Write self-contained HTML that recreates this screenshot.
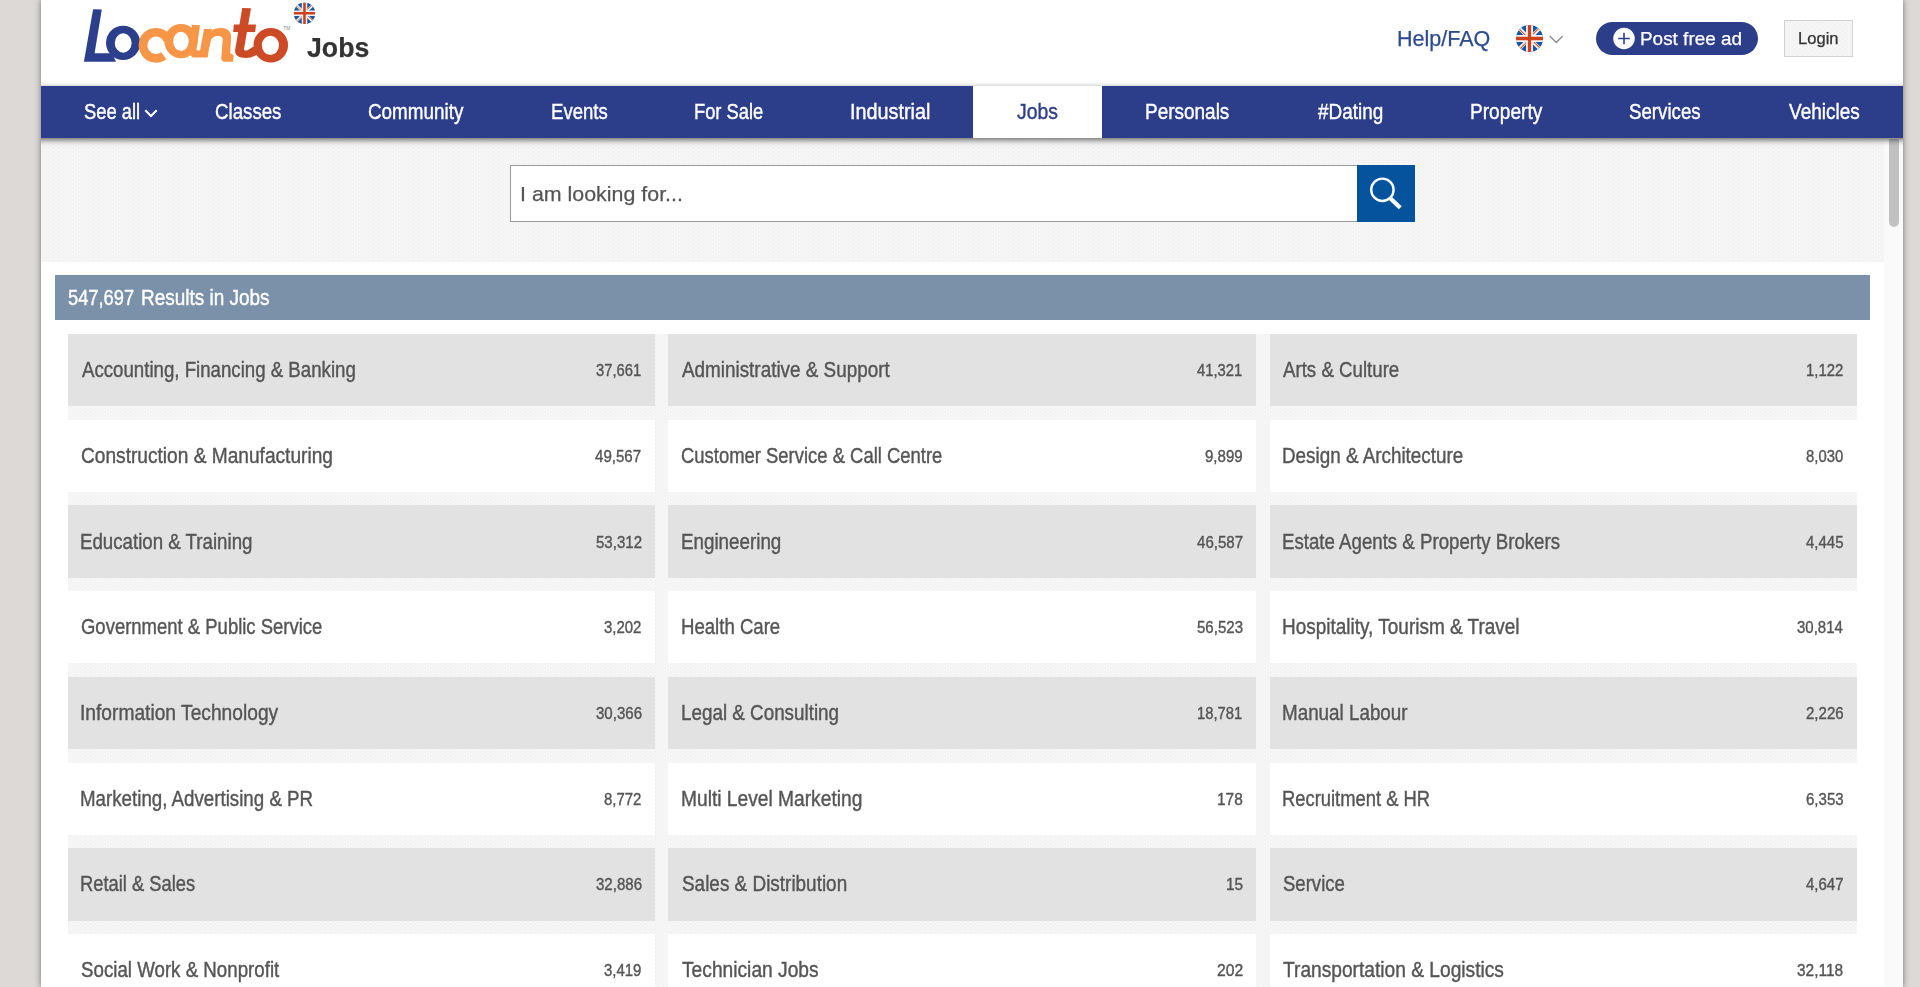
<!DOCTYPE html>
<html><head><meta charset="utf-8"><title>Locanto Jobs</title>
<style>
html,body{margin:0;padding:0}
body{width:1920px;height:987px;overflow:hidden;background:#ddd9d6;font-family:"Liberation Sans",sans-serif;position:relative}
div,span,svg{position:absolute}
#wrap{left:41px;top:0;width:1862px;height:987px;background:#fff;box-shadow:0 0 6px rgba(0,0,0,.5)}
#navclip{left:41px;top:0;width:1862px;height:987px;overflow:hidden}
#nav{left:-12px;top:86px;width:1886px;height:52px;background:#2c3e8a;box-shadow:0 2px 6px rgba(0,0,0,.6)}
#tab{left:973px;top:86px;width:129px;height:52px;background:#fff}
#szone{left:41px;top:138px;width:1843px;height:124px;background-color:#f6f6f6;background-image:radial-gradient(circle,#efefef 0.6px,rgba(239,239,239,0) 1.1px),radial-gradient(circle,#efefef 0.6px,rgba(239,239,239,0) 1.1px);background-size:5px 4px,5px 4px;background-position:0 0,2.5px 2px}
#track{left:1884px;top:138px;width:19px;height:849px;background:#fafafa}
#thumb{left:1889px;top:139px;width:10px;height:88px;background:#c1c1c1;border-radius:0 0 5px 5px}
#input{left:510px;top:165px;width:846px;height:55px;background:#fff;border:1px solid #999}
#sbtn{left:1357px;top:165px;width:57.5px;height:57px;background:#05539c}
#rbar{left:54.6px;top:275.2px;width:1815.4px;height:45.2px;background:#7b91a9}
#grid{left:68px;top:334px;width:1789px;height:653px;background-color:#f6f6f6;background-image:radial-gradient(circle,#efefef 0.6px,rgba(239,239,239,0) 1.1px),radial-gradient(circle,#efefef 0.6px,rgba(239,239,239,0) 1.1px);background-size:5px 4px,5px 4px;background-position:0 0,2.5px 2px}
.cell{height:72.3px}
#texts{left:0;top:0;width:1920px;height:987px;will-change:transform}
.t{white-space:nowrap;line-height:1;transform-origin:0 0}
.t{-webkit-text-stroke:0.25px}
.t.rc{-webkit-text-stroke:0.4px}
#pill{left:1596px;top:22.3px;width:162px;height:32.6px;border-radius:17px;background:#2c3e8a}
#login{left:1784.4px;top:20.2px;width:66.6px;height:34.4px;border:1px solid #d2d2d2;background-color:#f5f5f5;background-image:radial-gradient(circle,#efefef 0.6px,rgba(239,239,239,0) 1.1px),radial-gradient(circle,#efefef 0.6px,rgba(239,239,239,0) 1.1px);background-size:5px 4px,5px 4px;background-position:0 0,2.5px 2px}
</style></head><body>
<div id="wrap"></div>
<div id="szone"></div>
<div id="track"></div><div id="thumb"></div>
<div id="navclip"><div id="nav"></div></div><div id="tab"></div>
<div id="input"></div><div id="sbtn"></div>
<div id="rbar"></div>
<div id="grid"></div>
<div class="cell" style="left:68.0px;top:334.00px;width:586.8px;background:#e2e2e2"></div>
<div class="cell" style="left:668.3px;top:334.00px;width:588.0px;background:#e2e2e2"></div>
<div class="cell" style="left:1269.6px;top:334.00px;width:587.2px;background:#e2e2e2"></div>
<div class="cell" style="left:68.0px;top:419.71px;width:586.8px;background:#fff"></div>
<div class="cell" style="left:668.3px;top:419.71px;width:588.0px;background:#fff"></div>
<div class="cell" style="left:1269.6px;top:419.71px;width:587.2px;background:#fff"></div>
<div class="cell" style="left:68.0px;top:505.43px;width:586.8px;background:#e2e2e2"></div>
<div class="cell" style="left:668.3px;top:505.43px;width:588.0px;background:#e2e2e2"></div>
<div class="cell" style="left:1269.6px;top:505.43px;width:587.2px;background:#e2e2e2"></div>
<div class="cell" style="left:68.0px;top:591.14px;width:586.8px;background:#fff"></div>
<div class="cell" style="left:668.3px;top:591.14px;width:588.0px;background:#fff"></div>
<div class="cell" style="left:1269.6px;top:591.14px;width:587.2px;background:#fff"></div>
<div class="cell" style="left:68.0px;top:676.86px;width:586.8px;background:#e2e2e2"></div>
<div class="cell" style="left:668.3px;top:676.86px;width:588.0px;background:#e2e2e2"></div>
<div class="cell" style="left:1269.6px;top:676.86px;width:587.2px;background:#e2e2e2"></div>
<div class="cell" style="left:68.0px;top:762.57px;width:586.8px;background:#fff"></div>
<div class="cell" style="left:668.3px;top:762.57px;width:588.0px;background:#fff"></div>
<div class="cell" style="left:1269.6px;top:762.57px;width:587.2px;background:#fff"></div>
<div class="cell" style="left:68.0px;top:848.29px;width:586.8px;background:#e2e2e2"></div>
<div class="cell" style="left:668.3px;top:848.29px;width:588.0px;background:#e2e2e2"></div>
<div class="cell" style="left:1269.6px;top:848.29px;width:587.2px;background:#e2e2e2"></div>
<div class="cell" style="left:68.0px;top:934.00px;width:586.8px;background:#fff"></div>
<div class="cell" style="left:668.3px;top:934.00px;width:588.0px;background:#fff"></div>
<div class="cell" style="left:1269.6px;top:934.00px;width:587.2px;background:#fff"></div>
<div id="pill"></div><div id="login"></div>
<svg width="1920" height="987" viewBox="0 0 1920 987" style="left:0;top:0">
<defs>
<clipPath id="fc"><circle cx="0" cy="0" r="50"/></clipPath>
<g id="flag" clip-path="url(#fc)">
<rect x="-50" y="-50" width="100" height="100" fill="#1756a3"/>
<path d="M-50,-50L50,50M50,-50L-50,50" stroke="#f1f4f7" stroke-width="12.5"/>
<path d="M-1.56,1.56L-51.56,-48.44M-1.56,-1.56L48.44,-51.56M1.56,-1.56L51.56,48.44M1.56,1.56L-48.44,51.56" stroke="#e2501f" stroke-width="4"/>
<path d="M0,-50V50M-50,0H50" stroke="#f1f4f7" stroke-width="25.5"/>
<path d="M0,-50V50M-50,0H50" stroke="#cf401d" stroke-width="12"/>
</g>
</defs>
<!-- logo -->
<g id="logo">
<path fill="#2b3f8c" d="M93.1,9.3 L101.8,9.5 L94.6,53.2 L112,53.2 L116,61.7 L83.9,61.7 Z"/>
<path fill="#2b3f8c" fill-rule="evenodd" d="M106,42.9 a17.1,17.1 0 1,0 34.2,0 a17.1,17.1 0 1,0 -34.2,0 Z M114.75,43 a8.45,9.65 0 1,0 16.9,0 a8.45,9.65 0 1,0 -16.9,0 Z"/>
<g fill="#f79646" stroke="none">
<path d="M167.8,39.8 A13,13 0 1,0 163.8,55.7" fill="none" stroke="#f79646" stroke-width="8.7"/>
<path fill-rule="evenodd" d="M164.3,41.05 a16.7,17.15 0 1,0 33.4,0 a16.7,17.15 0 1,0 -33.4,0 Z M173.2,41.4 a7.75,9.6 0 1,0 15.5,0 a7.75,9.6 0 1,0 -15.5,0 Z"/>
<path d="M191.6,24.7 L200.05,25.2 L196.4,50.3 L200.05,50.5 L204,28.9 L211.9,28.9 L211.6,31 L207.7,57.6 L192.7,57.6 L190,55 L192,45 Z"/>
<path d="M211.7,30.4 C214,28.6 218,28 221.7,28.1 C228,28.3 231.4,32 231.1,38 L230.2,53.3 L233.8,55.3 L232.8,61.85 L224.5,61.85 Q221.5,61.5 221.3,58 L222.7,39.5 C222.8,36.8 220.5,36 218,36 C214.5,36 211.5,37.5 210.6,41.5 L209.5,47 L207,47 Z"/>
</g>
<g fill="#cd4a27">
<path d="M242.25,7.9 L251,8.3 L244,49 C243.8,50.5 246,51 248,50 L253.5,46.5 L258,54 C252,58 247,58.2 243,57.8 C237,57 234.5,54 235.2,49.5 Z"/>
<path d="M233.9,24.4 L256,24.4 L255.2,32.1 L233.1,32.1 Z"/>
<path fill-rule="evenodd" d="M253.45,45.2 a17.3,17.3 0 1,0 34.6,0 a17.3,17.3 0 1,0 -34.6,0 Z M261.85,45.4 a8.55,9.6 0 1,0 17.1,0 a8.55,9.6 0 1,0 -17.1,0 Z"/>
</g>
<text x="283.3" y="29.7" font-family="Liberation Sans, sans-serif" font-size="4.8" fill="#888">TM</text>
</g>
<use href="#flag" transform="translate(304.5,13.3) scale(0.216)"/>
<use href="#flag" transform="translate(1529.5,38.5) scale(0.272)"/>
<!-- chevrons -->
<path d="M145.3,110.3 L151,116 L156.7,110.3" fill="none" stroke="#fff" stroke-width="2"/>
<path d="M1549.8,36.1 L1556.3,42.4 L1562.7,36" fill="none" stroke="#8c8c8c" stroke-width="1.4"/>
<!-- plus icon -->
<circle cx="1624" cy="38.5" r="10.75" fill="#fff"/>
<path d="M1618.2,38.5 H1629.8 M1624,32.7 V44.3" stroke="#2c3e8a" stroke-width="1.6" fill="none"/>
<!-- magnifier -->
<circle cx="1382.4" cy="189.8" r="11.2" fill="none" stroke="#fff" stroke-width="2.4"/>
<path d="M1390.2,198.2 L1400.3,207.7" stroke="#fff" stroke-width="4.3" stroke-linecap="butt" fill="none"/>
</svg>

<div id="texts">
<span class="t rc" style="left:83.73px;top:101.00px;font-size:22px;color:#fff;transform:scaleX(0.8353)">See all</span>
<span class="t rc" style="left:214.62px;top:101.00px;font-size:22px;color:#fff;transform:scaleX(0.8494)">Classes</span>
<span class="t rc" style="left:368.12px;top:101.00px;font-size:22px;color:#fff;transform:scaleX(0.8574)">Community</span>
<span class="t rc" style="left:550.55px;top:101.00px;font-size:22px;color:#fff;transform:scaleX(0.8442)">Events</span>
<span class="t rc" style="left:694.07px;top:101.00px;font-size:22px;color:#fff;transform:scaleX(0.8319)">For Sale</span>
<span class="t rc" style="left:849.70px;top:101.00px;font-size:22px;color:#fff;transform:scaleX(0.9001)">Industrial</span>
<span class="t rc" style="left:1017.20px;top:101.00px;font-size:22px;color:#2c3e8a;transform:scaleX(0.8803)">Jobs</span>
<span class="t rc" style="left:1145.02px;top:101.00px;font-size:22px;color:#fff;transform:scaleX(0.8620)">Personals</span>
<span class="t rc" style="left:1318.25px;top:101.00px;font-size:22px;color:#fff;transform:scaleX(0.8613)">#Dating</span>
<span class="t rc" style="left:1469.76px;top:101.00px;font-size:22px;color:#fff;transform:scaleX(0.8689)">Property</span>
<span class="t rc" style="left:1629.42px;top:101.00px;font-size:22px;color:#fff;transform:scaleX(0.8496)">Services</span>
<span class="t rc" style="left:1789.00px;top:101.00px;font-size:22px;color:#fff;transform:scaleX(0.8646)">Vehicles</span>
<span class="t" style="left:1397.07px;top:29.00px;font-size:21.5px;color:#2c4b8e;transform:scaleX(1.0007)">Help/FAQ</span>
<span class="t" style="left:1639.52px;top:30.00px;font-size:18.5px;color:#fff;transform:scaleX(1.0229)">Post free ad</span>
<span class="t" style="left:1798.21px;top:31.00px;font-size:15.8px;color:#333;transform:scaleX(1.0482)">Login</span>
<span class="t" style="left:307.00px;top:34.00px;font-size:27.4px;font-weight:700;color:#333;transform:scaleX(0.9739)">Jobs</span>
<span class="t" style="left:519.58px;top:183.00px;font-size:21px;color:#555;transform:scaleX(1.0190)">I am looking for...</span>
<span class="t rc" style="left:68.18px;top:287.00px;font-size:22px;color:#fff;transform:scaleX(0.8307)">547,697</span>
<span class="t rc" style="left:141.02px;top:287.00px;font-size:22px;color:#fff;transform:scaleX(0.8619)">Results in Jobs</span>
<span class="t rc" style="left:81.75px;top:360.00px;font-size:21.5px;color:#555;transform:scaleX(0.8677)">Accounting, Financing &amp; Banking</span>
<span class="t rc" style="left:682.30px;top:360.00px;font-size:21.5px;color:#555;transform:scaleX(0.8778)">Administrative &amp; Support</span>
<span class="t rc" style="left:1283.30px;top:360.00px;font-size:21.5px;color:#555;transform:scaleX(0.8688)">Arts &amp; Culture</span>
<span class="t rc" style="left:80.85px;top:446.00px;font-size:21.5px;color:#555;transform:scaleX(0.8896)">Construction &amp; Manufacturing</span>
<span class="t rc" style="left:681.44px;top:446.00px;font-size:21.5px;color:#555;transform:scaleX(0.8578)">Customer Service &amp; Call Centre</span>
<span class="t rc" style="left:1281.83px;top:446.00px;font-size:21.5px;color:#555;transform:scaleX(0.8765)">Design &amp; Architecture</span>
<span class="t rc" style="left:80.29px;top:532.00px;font-size:21.5px;color:#555;transform:scaleX(0.8690)">Education &amp; Training</span>
<span class="t rc" style="left:680.83px;top:532.00px;font-size:21.5px;color:#555;transform:scaleX(0.8738)">Engineering</span>
<span class="t rc" style="left:1281.84px;top:532.00px;font-size:21.5px;color:#555;transform:scaleX(0.8681)">Estate Agents &amp; Property Brokers</span>
<span class="t rc" style="left:80.88px;top:617.00px;font-size:21.5px;color:#555;transform:scaleX(0.8595)">Government &amp; Public Service</span>
<span class="t rc" style="left:680.85px;top:617.00px;font-size:21.5px;color:#555;transform:scaleX(0.8647)">Health Care</span>
<span class="t rc" style="left:1281.82px;top:617.00px;font-size:21.5px;color:#555;transform:scaleX(0.8823)">Hospitality, Tourism &amp; Travel</span>
<span class="t rc" style="left:80.25px;top:703.00px;font-size:21.5px;color:#555;transform:scaleX(0.8930)">Information Technology</span>
<span class="t rc" style="left:680.83px;top:703.00px;font-size:21.5px;color:#555;transform:scaleX(0.8756)">Legal &amp; Consulting</span>
<span class="t rc" style="left:1281.83px;top:703.00px;font-size:21.5px;color:#555;transform:scaleX(0.8754)">Manual Labour</span>
<span class="t rc" style="left:80.29px;top:789.00px;font-size:21.5px;color:#555;transform:scaleX(0.8708)">Marketing, Advertising &amp; PR</span>
<span class="t rc" style="left:680.80px;top:789.00px;font-size:21.5px;color:#555;transform:scaleX(0.8926)">Multi Level Marketing</span>
<span class="t rc" style="left:1281.86px;top:789.00px;font-size:21.5px;color:#555;transform:scaleX(0.8547)">Recruitment &amp; HR</span>
<span class="t rc" style="left:80.32px;top:874.00px;font-size:21.5px;color:#555;transform:scaleX(0.8535)">Retail &amp; Sales</span>
<span class="t rc" style="left:681.71px;top:874.00px;font-size:21.5px;color:#555;transform:scaleX(0.8803)">Sales &amp; Distribution</span>
<span class="t rc" style="left:1282.72px;top:874.00px;font-size:21.5px;color:#555;transform:scaleX(0.8625)">Service</span>
<span class="t rc" style="left:81.17px;top:960.00px;font-size:21.5px;color:#555;transform:scaleX(0.8703)">Social Work &amp; Nonprofit</span>
<span class="t rc" style="left:682.00px;top:960.00px;font-size:21.5px;color:#555;transform:scaleX(0.8933)">Technician Jobs</span>
<span class="t rc" style="left:1283.00px;top:960.00px;font-size:21.5px;color:#555;transform:scaleX(0.8916)">Transportation &amp; Logistics</span>
<span class="t rc" style="left:595.54px;top:363.00px;font-size:16.8px;color:#555;transform:scaleX(0.8809)">37,661</span>
<span class="t rc" style="left:1196.82px;top:363.00px;font-size:16.8px;color:#555;transform:scaleX(0.8822)">41,321</span>
<span class="t rc" style="left:1806.19px;top:363.00px;font-size:16.8px;color:#555;transform:scaleX(0.8876)">1,122</span>
<span class="t rc" style="left:595.46px;top:449.00px;font-size:16.8px;color:#555;transform:scaleX(0.8981)">49,567</span>
<span class="t rc" style="left:1205.26px;top:449.00px;font-size:16.8px;color:#555;transform:scaleX(0.8967)">9,899</span>
<span class="t rc" style="left:1806.06px;top:449.00px;font-size:16.8px;color:#555;transform:scaleX(0.8852)">8,030</span>
<span class="t rc" style="left:595.53px;top:535.00px;font-size:16.8px;color:#555;transform:scaleX(0.8968)">53,312</span>
<span class="t rc" style="left:1196.81px;top:535.00px;font-size:16.8px;color:#555;transform:scaleX(0.8981)">46,587</span>
<span class="t rc" style="left:1805.99px;top:535.00px;font-size:16.8px;color:#555;transform:scaleX(0.8925)">4,445</span>
<span class="t rc" style="left:604.15px;top:620.00px;font-size:16.8px;color:#555;transform:scaleX(0.8909)">3,202</span>
<span class="t rc" style="left:1196.88px;top:620.00px;font-size:16.8px;color:#555;transform:scaleX(0.8968)">56,523</span>
<span class="t rc" style="left:1797.43px;top:620.00px;font-size:16.8px;color:#555;transform:scaleX(0.8921)">30,814</span>
<span class="t rc" style="left:595.53px;top:706.00px;font-size:16.8px;color:#555;transform:scaleX(0.8968)">30,366</span>
<span class="t rc" style="left:1197.03px;top:706.00px;font-size:16.8px;color:#555;transform:scaleX(0.8781)">18,781</span>
<span class="t rc" style="left:1805.81px;top:706.00px;font-size:16.8px;color:#555;transform:scaleX(0.8967)">2,226</span>
<span class="t rc" style="left:604.15px;top:792.00px;font-size:16.8px;color:#555;transform:scaleX(0.8909)">8,772</span>
<span class="t rc" style="left:1217.23px;top:792.00px;font-size:16.8px;color:#555;transform:scaleX(0.9187)">178</span>
<span class="t rc" style="left:1805.81px;top:792.00px;font-size:16.8px;color:#555;transform:scaleX(0.8967)">6,353</span>
<span class="t rc" style="left:595.53px;top:877.00px;font-size:16.8px;color:#555;transform:scaleX(0.8968)">32,886</span>
<span class="t rc" style="left:1225.85px;top:877.00px;font-size:16.8px;color:#555;transform:scaleX(0.9165)">15</span>
<span class="t rc" style="left:1805.99px;top:877.00px;font-size:16.8px;color:#555;transform:scaleX(0.8925)">4,647</span>
<span class="t rc" style="left:604.15px;top:963.00px;font-size:16.8px;color:#555;transform:scaleX(0.8909)">3,419</span>
<span class="t rc" style="left:1216.86px;top:963.00px;font-size:16.8px;color:#555;transform:scaleX(0.9322)">202</span>
<span class="t rc" style="left:1797.42px;top:963.00px;font-size:16.8px;color:#555;transform:scaleX(0.9197)">32,118</span>
</div>
</body></html>
